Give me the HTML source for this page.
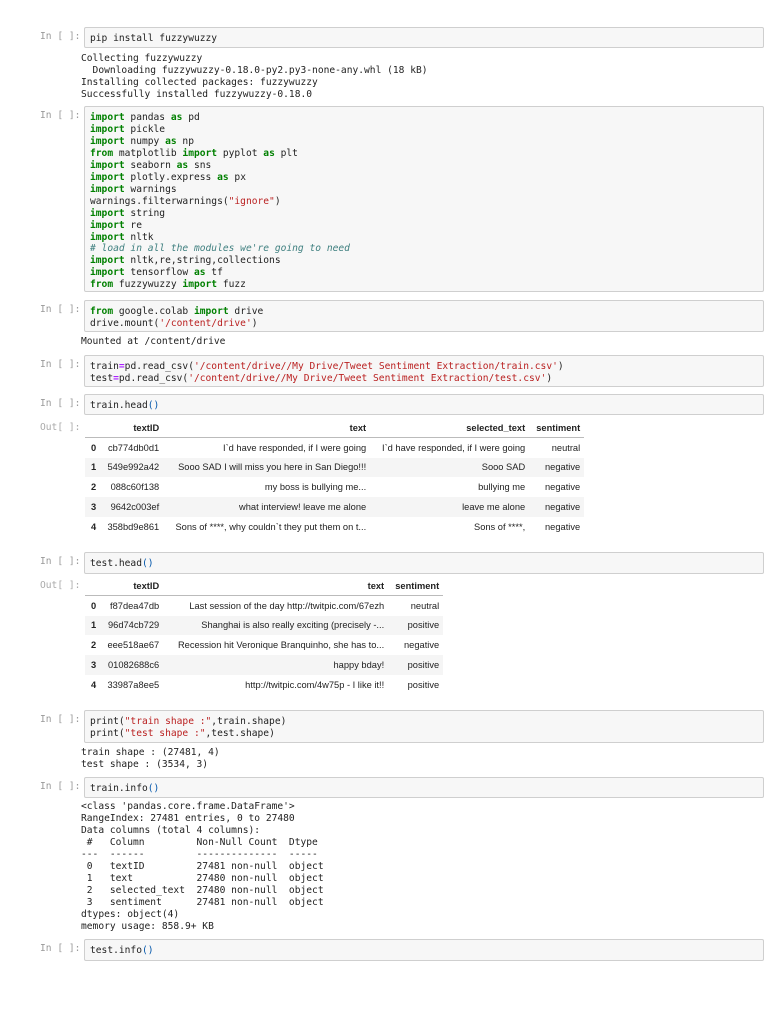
<!DOCTYPE html>
<html><head><meta charset="utf-8"><style>
body{margin:0;width:768px;height:1024px;background:#fff;position:relative;overflow:hidden;font-family:"DejaVu Sans Mono","Liberation Mono",monospace;}
.p{position:absolute;left:40px;font-size:9.6px;color:#9a9a9a;line-height:12px;white-space:pre}
.box{position:absolute;left:84px;width:680px;background:#f7f7f7;border:1px solid #cfcfcf;border-radius:2px;box-sizing:border-box}
pre{margin:0;font-family:inherit;font-size:9.6px;line-height:11.95px;color:#222}
.box pre{position:absolute;left:5px;top:5px}
.o{position:absolute;left:81px}
.k{color:#008000;font-weight:bold}
.s{color:#ba2121}
.c{color:#408080;font-style:italic}
.b{color:#0055aa}
.op{color:#aa22ff;font-weight:bold}
table{position:absolute;left:85px;border-collapse:collapse;font-family:"Liberation Sans",Arial,sans-serif;font-size:9.3px;color:#222}
td,th{height:19.8px;padding:0 4px;text-align:right;white-space:nowrap;box-sizing:border-box}
th{font-weight:bold}
thead tr{border-bottom:1px solid #bbb}
tbody tr:nth-child(odd){background:#fff}
tbody tr:nth-child(even){background:#f5f5f5}
tbody th{text-align:left;padding-left:6px}
</style></head><body>

<div class="p" style="top:31px">In [ ]:</div>
<div class="box" style="top:27px;height:21px"><pre>pip install fuzzywuzzy</pre></div>
<pre class="o" style="top:53px">Collecting fuzzywuzzy
  Downloading fuzzywuzzy-0.18.0-py2.py3-none-any.whl (18 kB)
Installing collected packages: fuzzywuzzy
Successfully installed fuzzywuzzy-0.18.0</pre>

<div class="p" style="top:110px">In [ ]:</div>
<div class="box" style="top:106px;height:186px"><pre><span class="k">import</span> pandas <span class="k">as</span> pd
<span class="k">import</span> pickle
<span class="k">import</span> numpy <span class="k">as</span> np
<span class="k">from</span> matplotlib <span class="k">import</span> pyplot <span class="k">as</span> plt
<span class="k">import</span> seaborn <span class="k">as</span> sns
<span class="k">import</span> plotly.express <span class="k">as</span> px
<span class="k">import</span> warnings
warnings.filterwarnings(<span class="s">"ignore"</span>)
<span class="k">import</span> string
<span class="k">import</span> re
<span class="k">import</span> nltk
<span class="c"># load in all the modules we're going to need</span>
<span class="k">import</span> nltk,re,string,collections
<span class="k">import</span> tensorflow <span class="k">as</span> tf
<span class="k">from</span> fuzzywuzzy <span class="k">import</span> fuzz</pre></div>

<div class="p" style="top:304px">In [ ]:</div>
<div class="box" style="top:300px;height:32px"><pre><span class="k">from</span> google.colab <span class="k">import</span> drive
drive.mount(<span class="s">'/content/drive'</span>)</pre></div>
<pre class="o" style="top:336px">Mounted at /content/drive</pre>

<div class="p" style="top:359px">In [ ]:</div>
<div class="box" style="top:355px;height:32px"><pre>train<span class="op">=</span>pd.read_csv(<span class="s">'/content/drive//My Drive/Tweet Sentiment Extraction/train.csv'</span>)
test<span class="op">=</span>pd.read_csv(<span class="s">'/content/drive//My Drive/Tweet Sentiment Extraction/test.csv'</span>)</pre></div>

<div class="p" style="top:398px">In [ ]:</div>
<div class="box" style="top:394px;height:21px"><pre>train.head<span class="b">()</span></pre></div>
<div class="p" style="top:422px;color:#aaa">Out[ ]:</div>
<table style="top:418px">
<colgroup><col style="width:15px"><col style="width:63px"><col style="width:207px"><col style="width:159px"><col style="width:55px"></colgroup>
<thead><tr><th></th><th>textID</th><th>text</th><th>selected_text</th><th>sentiment</th></tr></thead>
<tbody>
<tr><th>0</th><td>cb774db0d1</td><td>I`d have responded, if I were going</td><td>I`d have responded, if I were going</td><td>neutral</td></tr>
<tr><th>1</th><td>549e992a42</td><td>Sooo SAD I will miss you here in San Diego!!!</td><td>Sooo SAD</td><td>negative</td></tr>
<tr><th>2</th><td>088c60f138</td><td>my boss is bullying me...</td><td>bullying me</td><td>negative</td></tr>
<tr><th>3</th><td>9642c003ef</td><td>what interview! leave me alone</td><td>leave me alone</td><td>negative</td></tr>
<tr><th>4</th><td>358bd9e861</td><td>Sons of ****, why couldn`t they put them on t...</td><td>Sons of ****,</td><td>negative</td></tr>
</tbody></table>

<div class="p" style="top:556px">In [ ]:</div>
<div class="box" style="top:552px;height:22px"><pre>test.head<span class="b">()</span></pre></div>
<div class="p" style="top:580px;color:#aaa">Out[ ]:</div>
<table style="top:576px">
<colgroup><col style="width:15px"><col style="width:63px"><col style="width:225px"><col style="width:55px"></colgroup>
<thead><tr><th></th><th>textID</th><th>text</th><th>sentiment</th></tr></thead>
<tbody>
<tr><th>0</th><td>f87dea47db</td><td>Last session of the day http://twitpic.com/67ezh</td><td>neutral</td></tr>
<tr><th>1</th><td>96d74cb729</td><td>Shanghai is also really exciting (precisely -...</td><td>positive</td></tr>
<tr><th>2</th><td>eee518ae67</td><td>Recession hit Veronique Branquinho, she has to...</td><td>negative</td></tr>
<tr><th>3</th><td>01082688c6</td><td>happy bday!</td><td>positive</td></tr>
<tr><th>4</th><td>33987a8ee5</td><td>http://twitpic.com/4w75p - I like it!!</td><td>positive</td></tr>
</tbody></table>

<div class="p" style="top:714px">In [ ]:</div>
<div class="box" style="top:710px;height:33px"><pre>print(<span class="s">"train shape :"</span>,train.shape)
print(<span class="s">"test shape :"</span>,test.shape)</pre></div>
<pre class="o" style="top:747px">train shape : (27481, 4)
test shape : (3534, 3)</pre>

<div class="p" style="top:781px">In [ ]:</div>
<div class="box" style="top:777px;height:21px"><pre>train.info<span class="b">()</span></pre></div>
<pre class="o" style="top:801px">&lt;class 'pandas.core.frame.DataFrame'&gt;
RangeIndex: 27481 entries, 0 to 27480
Data columns (total 4 columns):
 #   Column         Non-Null Count  Dtype 
---  ------         --------------  ----- 
 0   textID         27481 non-null  object
 1   text           27480 non-null  object
 2   selected_text  27480 non-null  object
 3   sentiment      27481 non-null  object
dtypes: object(4)
memory usage: 858.9+ KB</pre>

<div class="p" style="top:943px">In [ ]:</div>
<div class="box" style="top:939px;height:22px"><pre>test.info<span class="b">()</span></pre></div>
</body></html>
